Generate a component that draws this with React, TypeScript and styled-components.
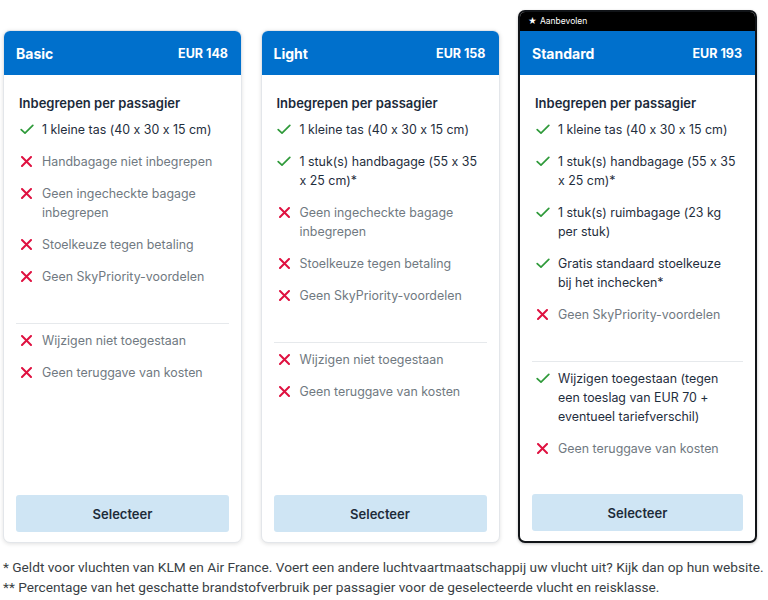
import React from "react";
import styled, { createGlobalStyle } from "styled-components";

const GlobalStyle = createGlobalStyle`
  html, body { margin: 0; padding: 0; background: #ffffff; }
  body {
    font-family: Inter, "Noto Sans", Roboto, sans-serif;
    font-feature-settings: "calt" 0;
    -webkit-font-smoothing: antialiased;
  }
  * { box-sizing: border-box; }
`;

type Feature = { ok: boolean; text: string };
type Fare = {
  name: string;
  price: string;
  featured?: boolean;
  baggage: Feature[];
  flexibility: Feature[];
};

const fares: Fare[] = [
  {
    name: "Basic",
    price: "EUR 148",
    baggage: [
      { ok: true, text: "1 kleine tas (40 x 30 x 15 cm)" },
      { ok: false, text: "Handbagage niet inbegrepen" },
      { ok: false, text: "Geen ingecheckte bagage inbegrepen" },
      { ok: false, text: "Stoelkeuze tegen betaling" },
      { ok: false, text: "Geen SkyPriority-voordelen" },
    ],
    flexibility: [
      { ok: false, text: "Wijzigen niet toegestaan" },
      { ok: false, text: "Geen teruggave van kosten" },
    ],
  },
  {
    name: "Light",
    price: "EUR 158",
    baggage: [
      { ok: true, text: "1 kleine tas (40 x 30 x 15 cm)" },
      { ok: true, text: "1 stuk(s) handbagage (55 x 35 x 25 cm)*" },
      { ok: false, text: "Geen ingecheckte bagage inbegrepen" },
      { ok: false, text: "Stoelkeuze tegen betaling" },
      { ok: false, text: "Geen SkyPriority-voordelen" },
    ],
    flexibility: [
      { ok: false, text: "Wijzigen niet toegestaan" },
      { ok: false, text: "Geen teruggave van kosten" },
    ],
  },
  {
    name: "Standard",
    price: "EUR 193",
    featured: true,
    baggage: [
      { ok: true, text: "1 kleine tas (40 x 30 x 15 cm)" },
      { ok: true, text: "1 stuk(s) handbagage (55 x 35 x 25 cm)*" },
      { ok: true, text: "1 stuk(s) ruimbagage (23 kg per stuk)" },
      { ok: true, text: "Gratis standaard stoelkeuze bij het inchecken*" },
      { ok: false, text: "Geen SkyPriority-voordelen" },
    ],
    flexibility: [
      { ok: true, text: "Wijzigen toegestaan (tegen een toeslag van EUR 70 + eventueel tariefverschil)" },
      { ok: false, text: "Geen teruggave van kosten" },
    ],
  },
];

const Page = styled.div`
  padding: 10px 0 0 3px;
  width: 768px;
`;

const FareGrid = styled.div`
  display: grid;
  grid-template-columns: 239px 239px 239px;
  column-gap: 18.5px;
  height: 533px;
`;

const Card = styled.article<{ $featured?: boolean }>`
  display: flex;
  flex-direction: column;
  margin-top: ${(p) => (p.$featured ? "0" : "20px")};
  border: ${(p) => (p.$featured ? "2px solid #111418" : "1px solid #e3e6ea")};
  border-radius: 7px;
  overflow: hidden;
  background: #ffffff;
  box-shadow: ${(p) =>
    p.$featured ? "0 1px 3px rgba(0,0,0,0.25)" : "0 1px 4px rgba(0,0,0,0.12)"};
`;

const Badge = styled.div`
  height: 19px;
  background: #000000;
  color: #ffffff;
  font-size: 8.5px;
  line-height: 19px;
  padding-left: 8px;
  display: flex;
  align-items: center;
  gap: 3px;
`;

const Header = styled.header`
  height: 44px;
  flex-shrink: 0;
  background: #0070cc;
  color: #ffffff;
  display: flex;
  align-items: center;
  justify-content: space-between;
  padding: 0 13px 0 12px;
  font-weight: 700;
`;

const FareName = styled.span`
  font-size: 14px;
`;

const Price = styled.span`
  font-size: 12.5px;
`;

const Body = styled.div`
  flex: 1;
  display: flex;
  flex-direction: column;
  padding: 19px 12px 10px 12px;
`;

const Heading = styled.h3`
  margin: 0;
  padding-left: 3px;
  font-size: 13px;
  line-height: 19px;
  font-weight: 600;
  color: #1b2a3a;
`;

const List = styled.ul<{ $divided?: boolean }>`
  list-style: none;
  margin: 0;
  padding: 0 0 0 3px;
  border-top: ${(p) => (p.$divided ? "1px solid #e6e9ec" : "none")};
  margin-bottom: ${(p) => (p.$divided ? "0" : "31px")};
`;

const Item = styled.li<{ $ok: boolean }>`
  display: flex;
  gap: 8px;
  padding: 6.5px 6px 6.5px 0;
  font-size: 12.4px;
  line-height: 19px;
  color: ${(p) => (p.$ok ? "#1f2e3d" : "#707981")};
`;

const IconBox = styled.span`
  width: 15px;
  height: 19px;
  flex-shrink: 0;
  display: flex;
  align-items: center;
  justify-content: center;
`;

const SelectButton = styled.button`
  margin-top: auto;
  height: 37px;
  width: 100%;
  border: none;
  border-radius: 3px;
  background: #cfe5f4;
  color: #1d2b39;
  font-family: inherit;
  font-size: 13px;
  font-weight: 600;
  cursor: pointer;
`;

const Notes = styled.div`
  margin-top: 14px;
  font-family: Roboto, "Noto Sans", sans-serif;
  font-size: 13.7px;
  line-height: 20px;
  color: #3a3f45;
  white-space: nowrap;
`;

const Check = () => (
  <svg width="14" height="11" viewBox="0 0 14 11" fill="none">
    <path d="M1.2 5.6 L5 9.2 L12.8 1.4" stroke="#2f9a3a" strokeWidth="1.7" strokeLinecap="round" strokeLinejoin="round" />
  </svg>
);

const Cross = () => (
  <svg width="11" height="11" viewBox="0 0 11 11" fill="none">
    <path d="M1 1 L10 10 M10 1 L1 10" stroke="#df1140" strokeWidth="2" strokeLinecap="round" />
  </svg>
);

const FeatureRow = ({ f }: { f: Feature }) => (
  <Item $ok={f.ok}>
    <IconBox>{f.ok ? <Check /> : <Cross />}</IconBox>
    <span>{f.text}</span>
  </Item>
);

const FareCard = ({ fare }: { fare: Fare }) => (
  <Card $featured={fare.featured}>
    {fare.featured && (
      <Badge>
        <span>★</span>
        <span>Aanbevolen</span>
      </Badge>
    )}
    <Header>
      <FareName>{fare.name}</FareName>
      <Price>{fare.price}</Price>
    </Header>
    <Body>
      <Heading>Inbegrepen per passagier</Heading>
      <List>
        {fare.baggage.map((f) => (
          <FeatureRow key={f.text} f={f} />
        ))}
      </List>
      <List $divided>
        {fare.flexibility.map((f) => (
          <FeatureRow key={f.text} f={f} />
        ))}
      </List>
      <SelectButton>Selecteer</SelectButton>
    </Body>
  </Card>
);

export default function App() {
  return (
    <>
      <GlobalStyle />
      <Page>
        <FareGrid>
          {fares.map((fare) => (
            <FareCard key={fare.name} fare={fare} />
          ))}
        </FareGrid>
        <Notes>
          <div>* Geldt voor vluchten van KLM en Air France. Voert een andere luchtvaartmaatschappij uw vlucht uit? Kijk dan op hun website.</div>
          <div>** Percentage van het geschatte brandstofverbruik per passagier voor de geselecteerde vlucht en reisklasse.</div>
        </Notes>
      </Page>
    </>
  );
}
